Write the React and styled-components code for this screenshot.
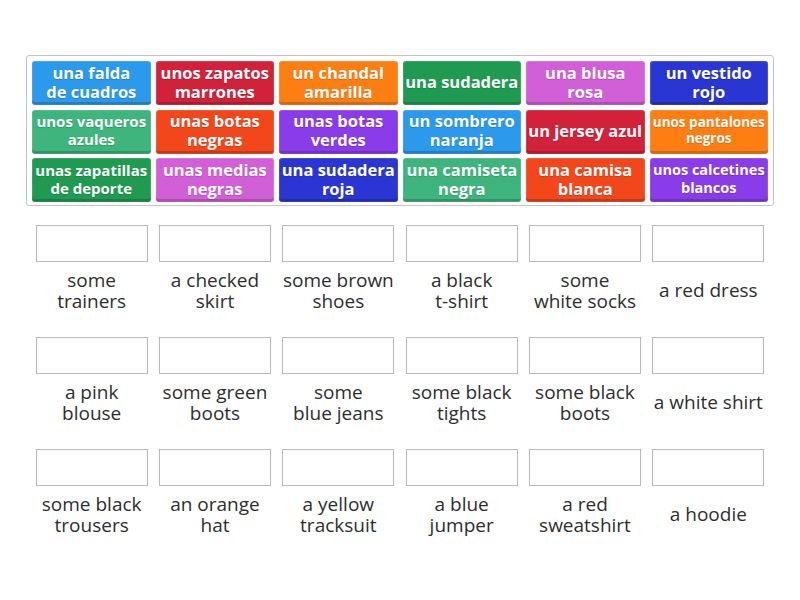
import styled, { createGlobalStyle } from "styled-components";

const GlobalStyle = createGlobalStyle`
  body {
    margin: 0;
    background: #ffffff;
    font-family: "Open Sans", "Liberation Sans", sans-serif;
  }
`;

const Page = styled.div`
  width: 800px;
  height: 600px;
  box-sizing: border-box;
  padding: 55px 26px 0 26px;
`;

const Bank = styled.div`
  box-sizing: border-box;
  width: 748px;
  border: 1px solid #c4c4c4;
  border-radius: 3px;
  padding: 5px 5px 3px 5px;
  display: grid;
  grid-template-columns: repeat(6, 1fr);
  column-gap: 5px;
  row-gap: 4.5px;
`;

const Tile = styled.div`
  height: 44px;
  box-sizing: border-box;
  border-radius: 3px;
  background-color: ${(p) => p.$color};
  box-shadow: inset 0 -3px 0 rgba(0, 0, 0, 0.18),
    inset 0 0 0 1px rgba(255, 255, 255, 0.12);
  color: #ffffff;
  font-weight: 700;
  font-size: ${(p) => p.$size || 16.5}px;
  line-height: ${(p) => (p.$size ? p.$size + 3 : 19)}px;
  text-align: center;
  display: flex;
  align-items: center;
  justify-content: center;
  padding: 0 0 3px;
  text-shadow: 0 1px 1px rgba(0, 0, 0, 0.15);
  overflow: hidden;
`;

const TileText = styled.span`
  white-space: pre;
`;

const Targets = styled.div`
  width: 740px;
  margin: 19px 0 0 4px;
  display: grid;
  grid-template-columns: repeat(6, 1fr);
  row-gap: 24px;
`;

const Slot = styled.div`
  display: flex;
  flex-direction: column;
  align-items: center;
`;

const DropBox = styled.div`
  width: 112px;
  height: 37px;
  box-sizing: border-box;
  border: 1px solid #b8b8b8;
  background: #ffffff;
`;

const Label = styled.div`
  height: 44px;
  margin-top: 7px;
  display: flex;
  align-items: center;
  justify-content: center;
  text-align: center;
  color: #2e2e2e;
  font-size: 19px;
  line-height: 21.5px;
  white-space: pre;
`;

const tiles = [
  { text: "una falda\nde cuadros", color: "#2b99ec" },
  { text: "unos zapatos\nmarrones", color: "#d3213a" },
  { text: "un chandal\namarilla", color: "#ff7e12" },
  { text: "una sudadera", color: "#1f9b51" },
  { text: "una blusa\nrosa", color: "#d35fd8" },
  { text: "un vestido\nrojo", color: "#2a36d3" },
  { text: "unos vaqueros\nazules", color: "#3db57c", size: 15 },
  { text: "unas botas\nnegras", color: "#f3461b" },
  { text: "unas botas\nverdes", color: "#8a3ceb" },
  { text: "un sombrero\nnaranja", color: "#2b99ec" },
  { text: "un jersey azul", color: "#d3213a" },
  { text: "unos pantalones\nnegros", color: "#ff7e12", size: 13.5 },
  { text: "unas zapatillas\nde deporte", color: "#1f9b51", size: 15 },
  { text: "unas medias\nnegras", color: "#d35fd8" },
  { text: "una sudadera\nroja", color: "#2a36d3" },
  { text: "una camiseta\nnegra", color: "#3db57c" },
  { text: "una camisa\nblanca", color: "#f3461b" },
  { text: "unos calcetines\nblancos", color: "#8a3ceb", size: 14.5 },
];

const labels = [
  "some\ntrainers",
  "a checked\nskirt",
  "some brown\nshoes",
  "a black\nt-shirt",
  "some\nwhite socks",
  "a red dress",
  "a pink\nblouse",
  "some green\nboots",
  "some\nblue jeans",
  "some black\ntights",
  "some black\nboots",
  "a white shirt",
  "some black\ntrousers",
  "an orange\nhat",
  "a yellow\ntracksuit",
  "a blue\njumper",
  "a red\nsweatshirt",
  "a hoodie",
];

const App = () => {
  return (
    <Page>
      <GlobalStyle />
      <Bank>
        {tiles.map((t, i) => (
          <Tile key={i} $color={t.color} $size={t.size}>
            <TileText>{t.text}</TileText>
          </Tile>
        ))}
      </Bank>
      <Targets>
        {labels.map((l, i) => (
          <Slot key={i}>
            <DropBox />
            <Label>{l}</Label>
          </Slot>
        ))}
      </Targets>
    </Page>
  );
};

export default App;
